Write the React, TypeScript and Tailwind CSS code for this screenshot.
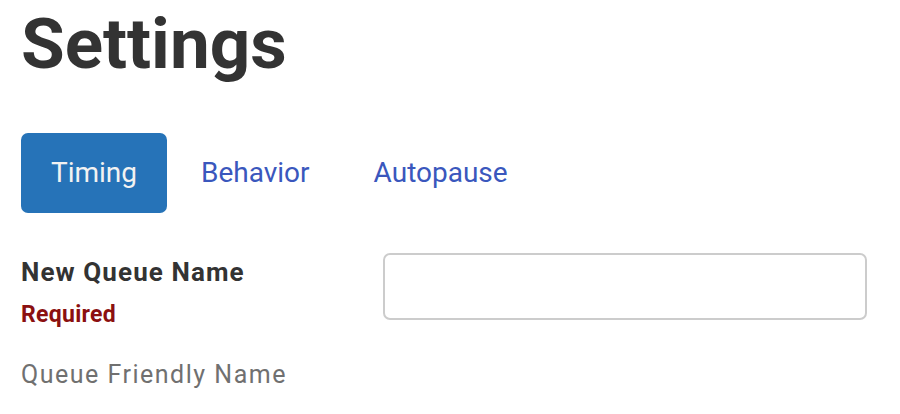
export default function App() {
  return (
    <div className="min-h-[414px] w-[900px] bg-white pl-[21px] pt-[2px] font-['Roboto',sans-serif]">
      <h1 className="text-[71px] font-bold leading-[84px] text-[#333333]">Settings</h1>
      <div className="mt-[47px] flex items-center">
        <button className="h-[80px] w-[146px] rounded-[7px] bg-[#2673b8] text-[28px] text-[#f2f2f2]">Timing</button>
        <button className="ml-[34px] text-[28px] text-[#3a57bd]">Behavior</button>
        <button className="ml-[64px] text-[28px] text-[#3a57bd]">Autopause</button>
      </div>
      <div className="mt-[41px] flex">
        <div className="w-[362px]">
          <div className="text-[26px] font-bold leading-[36px] tracking-[1.1px] text-[#333333]">New Queue Name</div>
          <div className="mt-[10px] text-[23px] font-bold leading-[30px] tracking-[0.3px] text-[#8b1010]">Required</div>
          <div className="mt-[28px] text-[25px] leading-[34px] tracking-[1.5px] text-[#707070]">Queue Friendly Name</div>
        </div>
        <div className="-mt-[1px]">
          <input className="h-[67px] w-[484px] rounded-[7px] border-[2px] border-[#cccccc] bg-white" />
        </div>
      </div>
    </div>
  );
}
